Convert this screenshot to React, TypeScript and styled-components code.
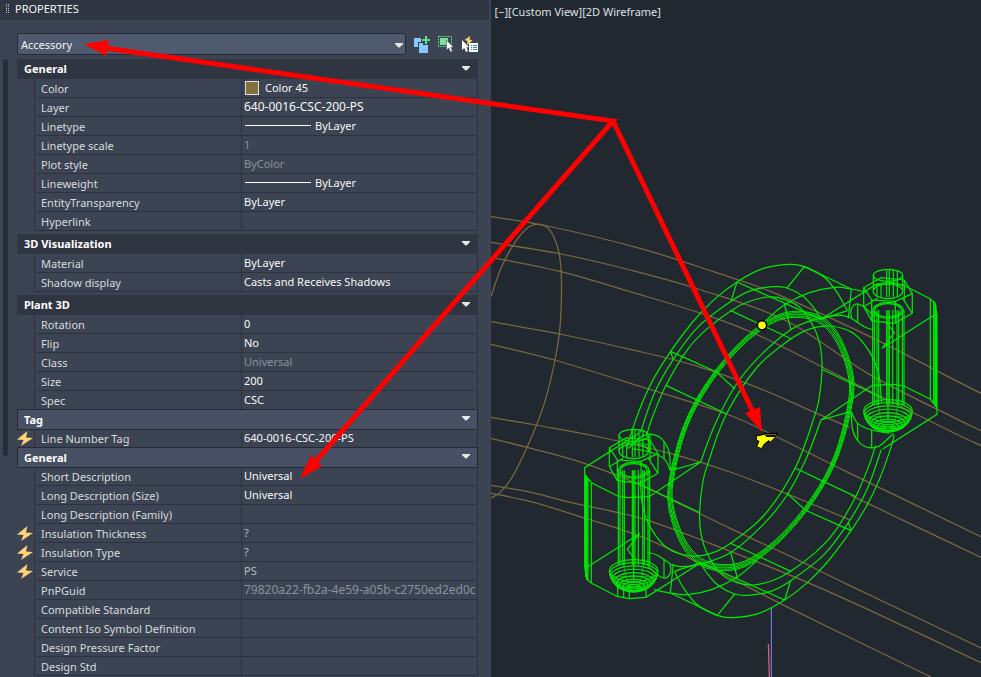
import React from "react";
import styled, { createGlobalStyle, css } from "styled-components";

const GlobalStyle = createGlobalStyle`
  *, *::before, *::after { box-sizing: border-box; }
  body { margin: 0; background: #212830; }
`;

const Workspace = styled.div`
  position: relative;
  display: grid;
  grid-template-columns: 1fr 1fr;
  height: 100vh;
  overflow: hidden;
  font-family: "Noto Sans", "Open Sans", sans-serif;
  font-size: 11px;
  color: #d8dade;
`;

const Palette = styled.aside`
  display: flex;
  flex-direction: column;
  min-width: 0;
  overflow: hidden;
  background: #3c4453;
`;

const TitleBar = styled.header`
  display: flex;
  align-items: center;
  gap: 5px;
  flex: 0 0 20px;
  margin-right: 2px;
  padding: 0 6px 2px;
  background: #2f3541;
  border-radius: 0 3px 0 0;
`;

const Title = styled.h1`
  margin: 0;
  font-size: 11px;
  line-height: 18px;
  font-weight: 400;
  color: #f2f3f5;
`;

const Toolbar = styled.div`
  display: flex;
  align-items: center;
  gap: 7px;
  padding: 13px 13px 4px 17px;
`;

const SelectBox = styled.div`
  position: relative;
  flex: 1;
  svg {
    position: absolute;
    right: 3px;
    top: 10px;
    pointer-events: none;
  }
`;

const TypeSelect = styled.select`
  display: block;
  width: 100%;
  height: 22px;
  padding: 0 3px;
  appearance: none;
  border: 1px solid #252b36;
  border-radius: 2px;
  background: #505a6e;
  color: #f2f3f5;
  font: inherit;
`;

const ToolButton = styled.button`
  display: block;
  width: 17px;
  height: 17px;
  padding: 0;
  border: 0;
  background: none;
  svg { display: block; }
`;

const Body = styled.div`
  display: grid;
  grid-template-columns: 5px 1fr;
  gap: 9px;
  padding: 0 13px 0 3px;
`;

const ScrollThumb = styled.div`
  height: 397px;
  border-radius: 3px;
  background: #282e38;
`;

const Section = styled.section<{ $gap?: boolean }>`
  margin-bottom: ${(p) => (p.$gap ? "3px" : "0")};
`;

const SectionHeading = styled.h2`
  margin: 0;
  font-size: 11px;
`;

const SectionButton = styled.button<{ $raised?: boolean }>`
  display: flex;
  align-items: center;
  justify-content: space-between;
  width: 100%;
  height: 20px;
  padding: 0 7px 1px;
  border: 0;
  background: #2f3541;
  color: #ffffff;
  font: inherit;
  font-weight: 700;
  ${(p) =>
    p.$raised &&
    css`
      position: relative;
      height: 21px;
      margin: -1px 0;
      padding: 0 6px 1px;
      border: 1px solid #252b36;
      background: #485064;
    `}
  svg { margin-right: 1px; margin-bottom: 1px; }
`;

const Grid = styled.table`
  width: 100%;
  table-layout: fixed;
  border-collapse: separate;
  border-spacing: 0;
`;

const Gutter = styled.td`
  width: 17px;
  height: 19px;
  padding: 0;
  svg { display: block; }
`;

const Name = styled.th`
  width: 208px;
  height: 19px;
  padding: 1px 0 0 6px;
  border-left: 1px solid #2d333e;
  border-right: 1px solid #2d333e;
  border-bottom: 1px solid #2d333e;
  font-weight: 400;
  line-height: 17px;
  text-align: left;
  white-space: nowrap;
`;

const Value = styled.td<{ $tone?: Tone; $large?: boolean }>`
  height: 19px;
  padding: 0 0 1px 2px;
  border-right: 1px solid #2d333e;
  border-bottom: 1px solid #2d333e;
  font-size: ${(p) => (p.$large ? "12px" : "11px")};
  line-height: 17px;
  white-space: nowrap;
  overflow: hidden;
  color: ${(p) =>
    p.$tone === "dim" ? "#8b9099" : p.$tone === "soft" ? "#b9bcc2" : "#f7f7f7"};
`;

const Inline = styled.span`
  display: flex;
  align-items: center;
  height: 17px;
  gap: 4px;
`;

const Swatch = styled.span`
  width: 14px;
  height: 14px;
  margin: 0 2px 0 1px;
  border: 1px solid #e0e0e0;
  background: #80703c;
`;

const LineSample = styled.span`
  width: 66px;
  height: 1px;
  margin-left: 1px;
  background: #ffffff;
`;

const Viewport = styled.main`
  position: relative;
  min-width: 0;
  overflow: hidden;
  background: #212830;
`;

const ViewControls = styled.div`
  position: absolute;
  top: 3px;
  left: 4px;
  line-height: 18px;
  color: #dfe1e4;
`;

const Drawing = styled.svg`
  display: block;
  width: 100%;
  height: 100%;
`;

const Annotation = styled.svg`
  position: absolute;
  inset: 0;
  width: 100%;
  height: 100%;
  pointer-events: none;
`;

type Tone = "dim" | "soft";
type Row = {
  name: string;
  value?: string;
  tone?: Tone;
  bolt?: boolean;
  large?: boolean;
  kind?: "swatch" | "line";
};
type Group = { title: string; raised?: boolean; gap?: boolean; rows: Row[] };

const groups: Group[] = [
  {
    title: "General",
    gap: true,
    rows: [
      { name: "Color", value: "Color 45", kind: "swatch" },
      { name: "Layer", value: "640-0016-CSC-200-PS", large: true },
      { name: "Linetype", value: "ByLayer", kind: "line" },
      { name: "Linetype scale", value: "1", tone: "dim" },
      { name: "Plot style", value: "ByColor", tone: "dim" },
      { name: "Lineweight", value: "ByLayer", kind: "line" },
      { name: "EntityTransparency", value: "ByLayer" },
      { name: "Hyperlink" },
    ],
  },
  {
    title: "3D Visualization",
    gap: true,
    rows: [
      { name: "Material", value: "ByLayer" },
      { name: "Shadow display", value: "Casts and Receives Shadows" },
    ],
  },
  {
    title: "Plant 3D",
    rows: [
      { name: "Rotation", value: "0" },
      { name: "Flip", value: "No" },
      { name: "Class", value: "Universal", tone: "dim" },
      { name: "Size", value: "200" },
      { name: "Spec", value: "CSC" },
    ],
  },
  {
    title: "Tag",
    raised: true,
    rows: [{ name: "Line Number Tag", value: "640-0016-CSC-200-PS", bolt: true }],
  },
  {
    title: "General",
    raised: true,
    rows: [
      { name: "Short Description", value: "Universal" },
      { name: "Long Description (Size)", value: "Universal" },
      { name: "Long Description (Family)" },
      { name: "Insulation Thickness", value: "?", tone: "soft", bolt: true },
      { name: "Insulation Type", value: "?", tone: "soft", bolt: true },
      { name: "Service", value: "PS", tone: "soft", bolt: true },
      { name: "PnPGuid", value: "79820a22-fb2a-4e59-a05b-c2750ed2ed0c", tone: "dim", large: true },
      { name: "Compatible Standard" },
      { name: "Content Iso Symbol Definition" },
      { name: "Design Pressure Factor" },
      { name: "Design Std" },
    ],
  },
];

const Caret = () => (
  <svg width="8" height="5" viewBox="0 0 8 5" aria-hidden="true">
    <path d="M0 0h8v1L4.5 4.5h-1L0 1z" fill="#e6e7e9" />
  </svg>
);

const Bolt = () => (
  <svg width="17" height="17" viewBox="0 0 17 17" aria-hidden="true">
    <path d="M10.500 1 0 9.500 6.500 10 4 16 16 8 9 7.500z" fill="#ffd277" />
  </svg>
);

const Grip = () => (
  <svg width="4" height="10" viewBox="0 0 4 10" aria-hidden="true" shapeRendering="crispEdges">
    {[0, 2, 4, 6, 8].map((y) => (
      <path key={y} d={`M0 ${y}h1v1h-1zM2 ${y}h1v1h-1z`} fill="#c9ccd1" />
    ))}
  </svg>
);

const PickAddIcon = () => (
  <svg width="17" height="17" viewBox="0 0 17 17" aria-hidden="true" shapeRendering="crispEdges">
    <path d="M1 2h7v4H5v5H1z" fill="#85c9ff" />
    <path d="M6 7h4v2h5v8H6z" fill="#85c9ff" />
    <path d="M12 0h2v3h3v2h-3v3h-2V5H9V3h3z" fill="#63dc82" />
  </svg>
);

const cursor = "M0 0v10l2.300-2 1.700 4 2-1-1.700-3.700H7z";

const SelectIcon = () => (
  <svg width="17" height="17" viewBox="0 0 17 17" aria-hidden="true">
    <rect x="1.500" y="0.500" width="13" height="10" fill="none" stroke="#63dc82" strokeDasharray="2 1" />
    <rect x="3" y="2" width="8" height="7" fill="#84dda0" />
    <path d={cursor} transform="translate(9.500 4)" fill="#fff" stroke="#3c4453" strokeWidth="0.500" />
  </svg>
);

const QuickSelectIcon = () => (
  <svg width="17" height="17" viewBox="0 0 17 17" aria-hidden="true">
    <path d="M9 0 3.500 4 6.500 5 6 9 11.500 4.500 8.500 3.500z" fill="#ffd277" />
    <path d={cursor} transform="translate(1 4)" fill="#fff" />
    <rect x="8" y="7" width="9" height="9" fill="#fff" />
    <path d="M10 9.500h1M12 9.500h4M10 11.500h1M12 11.500h4M10 13.500h1M12 13.500h4" stroke="#2a86d8" />
  </svg>
);

type Pt = [number, number];

/** Smooth curve through every point (Catmull-Rom written as cubic segments). */
function curve(pts: Pt[], closed = false): string {
  const n = pts.length;
  const at = (i: number): Pt =>
    closed ? pts[(i + n) % n] : pts[Math.max(0, Math.min(n - 1, i))];
  let d = `M${pts[0][0]} ${pts[0][1]}`;
  for (let i = 0; i < (closed ? n : n - 1); i++) {
    const [a, b, c, e] = [at(i - 1), at(i), at(i + 1), at(i + 2)];
    d += `C${b[0] + (c[0] - a[0]) / 6} ${b[1] + (c[1] - a[1]) / 6} ${c[0] - (e[0] - b[0]) / 6} ${
      c[1] - (e[1] - b[1]) / 6
    } ${c[0]} ${c[1]}`;
  }
  return d;
}

const CENTER: Pt = [839.5, 753];
const opposite = ([x, y]: Pt): Pt => [CENTER[0] * 2 - x, CENTER[1] * 2 - y];

const pipeCurves: Pt[][] = [
  [[30, 80], [200, 108], [480, 176], [697, 245], [877, 308], [1167, 440], [1407, 563], [1500, 610]],
  [[30, 157], [240, 192], [447, 240], [660, 300], [917, 393], [1160, 550], [1407, 677], [1500, 722]],
  [[30, 202], [240, 245], [447, 305], [660, 370], [837, 438], [1120, 580], [1407, 723], [1500, 767]],
  [[30, 395], [235, 432], [447, 478], [640, 526], [830, 593], [1000, 667], [1105, 712]],
  [[30, 463], [220, 510], [480, 590], [737, 672], [900, 747], [1107, 850], [1500, 1040]],
  [[30, 682], [180, 708], [340, 738], [567, 790], [747, 846], [927, 915], [1107, 990]],
  [[1110, 916], [1300, 1007], [1500, 1102]],
  [[30, 745], [150, 775], [310, 820], [480, 886], [747, 1015], [930, 1100], [1107, 1187], [1500, 1374]],
  [[30, 886], [150, 907], [267, 937], [480, 985], [687, 1060], [1000, 1186], [1250, 1300], [1500, 1418]],
  [[30, 910], [150, 935], [310, 984], [480, 1040], [700, 1140], [927, 1255], [1350, 1461]],
];

const pipeEnd: Pt[] = [
  [30, 320], [60, 235], [100, 160], [140, 113], [172, 103], [205, 118], [232, 180], [241, 260],
  [238, 400], [222, 510], [190, 640], [150, 745], [100, 850], [60, 905], [30, 924],
];

const halfRing: Pt[] = [
  [1114, 546], [1113, 640], [1070, 800], [1000, 930], [900, 1050], [800, 1125], [720, 1141], [650, 1120], [600, 1060],
];
const sealRing: Pt[] = [...halfRing, ...halfRing.map(opposite)];

const clampCurves: Pt[][] = [
  [[439, 771], [453, 722], [485, 635], [520, 562], [569, 484], [640, 390], [700, 328], [768, 276], [845, 236], [925, 223], [970, 230], [1030, 262], [1070, 310], [1099, 362]],
  [[478, 728], [520, 610], [577, 508], [650, 412], [750, 334], [810, 302], [878, 290], [918, 294], [965, 318], [1000, 355], [1022, 390]],
  [[495, 740], [515, 680], [555, 586], [620, 478], [680, 415], [750, 362], [800, 336], [862, 321], [910, 328], [960, 355], [1000, 415], [1019, 475], [1023, 540], [1015, 620], [1000, 680], [943, 833], [850, 975], [750, 1059], [690, 1090], [630, 1098], [560, 1075], [510, 1015], [485, 950], [478, 870]],
  [[1020, 690], [978, 800], [920, 912], [850, 1000], [750, 1087], [660, 1122], [600, 1130], [570, 1123]],
  [[850, 395], [910, 345], [985, 308], [1060, 292], [1111, 297], [1160, 307]],
  [[1112, 384], [1110, 360], [1125, 342], [1148, 350], [1180, 380]],
  [[1110, 384], [1150, 410], [1180, 420]],
  [[1111, 665], [1115, 720], [1135, 758], [1165, 773], [1195, 768], [1238, 730]],
  [[1111, 665], [1130, 700], [1172, 720], [1225, 730]],
];

const clampEdges = [
  "M768 276 750 334M768 276 1020 388M970 230 918 294M970 230 1111 297 1102 384",
  "M910 342 930 420M569 484 577 510M569 484 705 545 762 597M555 586 737 672M748 361 932 447",
  "M1023 538 1205 625M1020 690 1108 665M1020 388 1099 362",
  "M1020 388 1184 284 1234 280 1269 286 1348 327 1362 338 1368 375V673L1205 777",
  "M1020 690 1174 586 1239 583 1269 588 1348 628 1367 652",
  "M1348 327V628M1358 334V640M1362 338V646M1365 345V650",
  "M1368 370 1203 475 1240 428 1215 395",
  "M1130 343V397M1130 700V750M1172 720V773",
].join("");

const studLines = [1188, 1200, 1217, 1225, 1237, 1249];
const shankLines = [1175, 1180, 1188, 1193, 1217, 1221, 1225, 1235, 1248, 1253, 1264, 1269];
const bowl = [0, 9, 18, 27, 36, 45, 54, 63, 72, 80].map((deg) => {
  const a = (deg * Math.PI) / 180;
  return { rx: 73 * Math.cos(a), cy: 662 + 55 * Math.sin(a) };
});

const BoltAssembly = () => (
  <g>
    <ellipse cx="1221" cy="256" rx="44" ry="18" />
    <ellipse cx="1221" cy="304" rx="44" ry="22" />
    <path d="M1177 285q44-15 88 0" />
    <path d="M1177 256V304M1265 256V304" />
    {studLines.map((x) => (
      <path key={x} d={`M${x} ${x % 2 ? 240 : 280}V322`} />
    ))}
    <path d="M1148 293 1200 263 1270 270 1294 311 1243 334 1172 330z" />
    <path d="M1148 350 1172 392 1240 400 1294 370M1148 350 1190 325M1294 370 1265 325" />
    <path d="M1148 293V350M1294 311V370M1172 330V392M1243 334V400M1270 270V330" />
    <ellipse cx="1221" cy="361" rx="46" ry="24" />
    <ellipse cx="1221" cy="361" rx="40" ry="20" />
    {shankLines.map((x) => (
      <path key={x} d={`M${x} 361V${x === 1221 ? 700 : 645}`} />
    ))}
    {bowl.map((b) => (
      <ellipse key={b.cy} cx="1221" cy={b.cy} rx={b.rx} ry={b.rx * 0.45} />
    ))}
    <path d="M1190 640 1205 715M1252 640 1237 715M1165 680 1277 680" strokeOpacity="0.6" />
  </g>
);

const ClampHalf = () => (
  <g>
    {clampCurves.map((pts, i) => (
      <path key={i} d={curve(pts)} />
    ))}
    <path d={clampEdges} />
  </g>
);

const Model = () => (
  <Drawing viewBox="30 -570 1470 2031" preserveAspectRatio="xMinYMin meet" role="img" aria-label="Pipe clamp wireframe">
    <g fill="none" stroke="#7a683f" strokeWidth="3.800">
      {pipeCurves.map((pts, i) => (
        <path key={i} d={curve(pts)} />
      ))}
      <path d={curve(pipeEnd)} />
    </g>
    <path d="M871 1252V1461" stroke="#7878e8" strokeWidth="3.500" />
    <path d="M862 1362 865 1461" stroke="#d86a70" strokeWidth="3.500" />
    <g fill="none" stroke="#00e800" strokeWidth="3.600">
      <ClampHalf />
      <g transform="rotate(180 839.5 753)">
        <ClampHalf />
      </g>
      <g strokeWidth="3">
        {[1.002, 0.991, 0.98, 0.966, 0.955].map((s) => (
          <path
            key={s}
            d={curve(sealRing.map(([x, y]): Pt => [CENTER[0] + (x - CENTER[0]) * s, CENTER[1] + (y - CENTER[1]) * s]), true)}
          />
        ))}
      </g>
      <BoltAssembly />
      <g transform="translate(-763 480)">
        <BoltAssembly />
      </g>
      <path d="M410 1175V1220M428 1190V1224M445 1200V1226M495 1195V1222" />
    </g>
    <circle cx="843" cy="406" r="14" fill="#ffff00" stroke="#000" strokeWidth="5" />
    <path d="M846 728H893L866 760z" fill="#000" />
    <path
      d="M826 738 850 733 858 740 868 748 858 756 850 762 842 776 827 770 834 754 826 750z"
      fill="#ffff00"
      stroke="#000"
      strokeWidth="3"
    />
    <path d="M854 741H882L868 755z" fill="#ffff00" />
    <path d="M850 734H886" stroke="#8a7a00" strokeWidth="3" />
  </Drawing>
);

function ValueContent({ row }: { row: Row }) {
  if (row.kind === "swatch")
    return (
      <Inline>
        <Swatch />
        {row.value}
      </Inline>
    );
  if (row.kind === "line")
    return (
      <Inline>
        <LineSample />
        {row.value}
      </Inline>
    );
  return <>{row.value}</>;
}

function PropertyGroup({ group }: { group: Group }) {
  return (
    <Section $gap={group.gap}>
      <SectionHeading>
        <SectionButton type="button" aria-expanded="true" $raised={group.raised}>
          {group.title}
          <Caret />
        </SectionButton>
      </SectionHeading>
      <Grid aria-label={group.title}>
        <tbody>
          {group.rows.map((row) => (
            <tr key={row.name}>
              <Gutter>{row.bolt && <Bolt />}</Gutter>
              <Name scope="row">{row.name}</Name>
              <Value $tone={row.tone} $large={row.large}>
                <ValueContent row={row} />
              </Value>
            </tr>
          ))}
        </tbody>
      </Grid>
    </Section>
  );
}

export default function App() {
  return (
    <>
      <GlobalStyle />
      <Workspace>
        <Palette aria-label="Properties">
          <TitleBar>
            <Grip />
            <Title>PROPERTIES</Title>
          </TitleBar>
          <Toolbar>
            <SelectBox>
              <TypeSelect aria-label="Object type" defaultValue="Accessory">
                <option>Accessory</option>
              </TypeSelect>
              <Caret />
            </SelectBox>
            <ToolButton type="button" aria-label="Toggle pick add">
              <PickAddIcon />
            </ToolButton>
            <ToolButton type="button" aria-label="Select objects">
              <SelectIcon />
            </ToolButton>
            <ToolButton type="button" aria-label="Quick select">
              <QuickSelectIcon />
            </ToolButton>
          </Toolbar>
          <Body>
            <ScrollThumb />
            <div>
              {groups.map((group, i) => (
                <PropertyGroup key={i} group={group} />
              ))}
            </div>
          </Body>
        </Palette>
        <Viewport>
          <ViewControls>[−][Custom View][2D Wireframe]</ViewControls>
          <Model />
        </Viewport>
        <Annotation aria-hidden="true">
          <path d="M105 48 613 121 315 462M613 121 753 412" fill="none" stroke="#ff0000" strokeWidth="5" />
          <path d="M84 44 109 40 106 56zM300 479 311 455 322 466zM762 432 745 413 760 407z" fill="#ff0000" />
        </Annotation>
      </Workspace>
    </>
  );
}
